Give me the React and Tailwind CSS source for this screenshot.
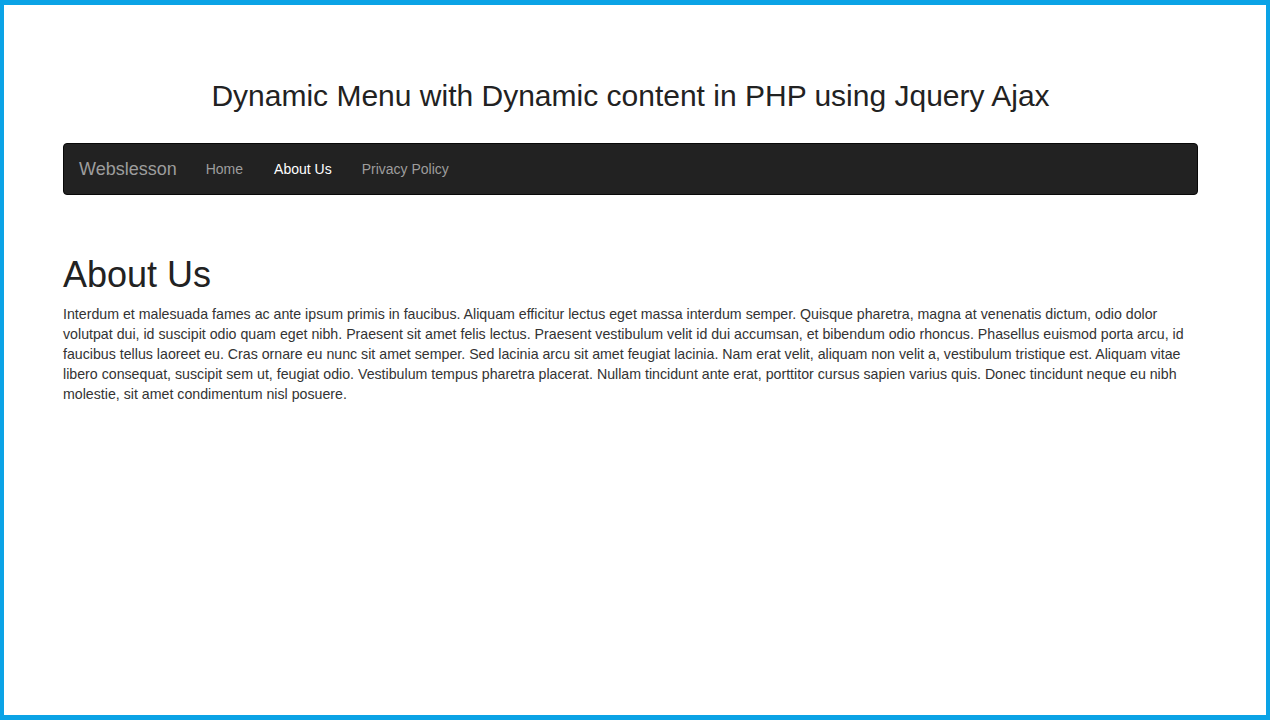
export default function App() {
  const font = { fontFamily: '"Liberation Sans", Arial, Helvetica, sans-serif' };
  return (
    <div className="w-[1270px] h-[720px] box-border border-x-4 border-y-[5px] border-[#0ba3e6] bg-white overflow-hidden text-[#333]" style={font}>
      <div className="w-[1135px] ml-[59px]">
        <h3 className="pt-[74px] text-center text-[30px] leading-[33px] text-[#222]">
          Dynamic Menu with Dynamic content in PHP using Jquery Ajax
        </h3>
        <nav className="mt-[31px] h-[52px] rounded-[4px] bg-[#222] border border-[#080808] flex items-center">
          <span className="pl-[15px] pr-[14px] text-[18px] text-[#9d9d9d]">Webslesson</span>
          <span className="pl-[15px] pr-[16px] text-[14px] text-[#9d9d9d]">Home</span>
          <span className="px-[15px] text-[14px] text-white">About Us</span>
          <span className="px-[15px] text-[14px] text-[#9d9d9d]">Privacy Policy</span>
        </nav>
        <h1 className="mt-[60px] text-[36px] leading-[40px] text-[#222]">About Us</h1>
        <p className="mt-[9px] text-[14.2px] leading-[20px] text-[#333]">
          Interdum et malesuada fames ac ante ipsum primis in faucibus. Aliquam efficitur lectus eget massa interdum semper. Quisque pharetra, magna at venenatis dictum, odio dolor volutpat dui, id suscipit odio quam eget nibh. Praesent sit amet felis lectus. Praesent vestibulum velit id dui accumsan, et bibendum odio rhoncus. Phasellus euismod porta arcu, id faucibus tellus laoreet eu. Cras ornare eu nunc sit amet semper. Sed lacinia arcu sit amet feugiat lacinia. Nam erat velit, aliquam non velit a, vestibulum tristique est. Aliquam vitae libero consequat, suscipit sem ut, feugiat odio. Vestibulum tempus pharetra placerat. Nullam tincidunt ante erat, porttitor cursus sapien varius quis. Donec tincidunt neque eu nibh molestie, sit amet condimentum nisl posuere.
        </p>
      </div>
    </div>
  );
}
